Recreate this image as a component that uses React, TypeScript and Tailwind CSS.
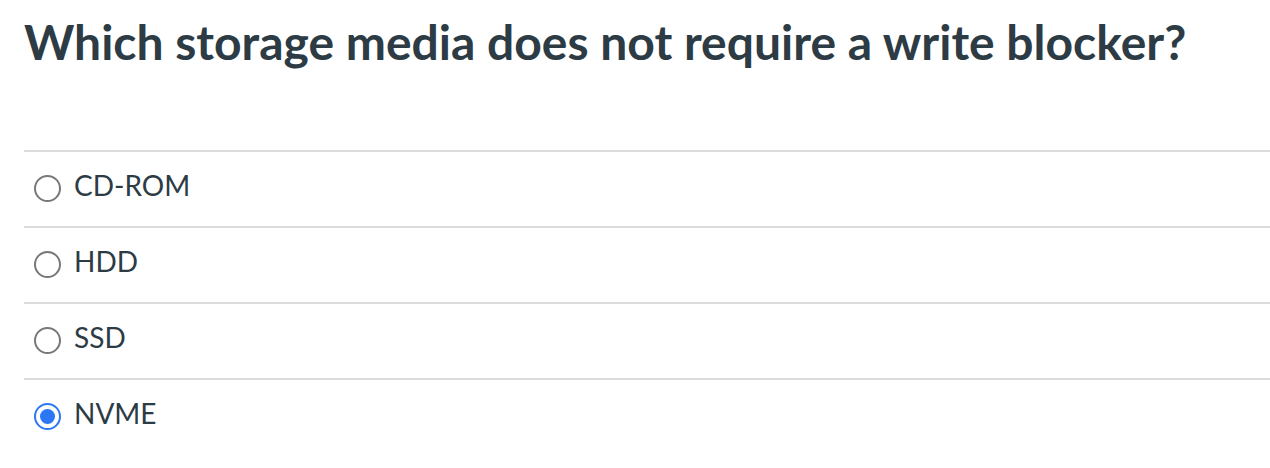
const options = ["CD-ROM", "HDD", "SSD", "NVME"];

function Radio({ checked }: { checked: boolean }) {
  return checked ? (
    <span className="flex h-[27px] w-[27px] shrink-0 items-center justify-center rounded-full border-[2.5px] border-[#2c77f4] bg-white">
      <span className="h-[15px] w-[15px] rounded-full bg-[#2c77f4]" />
    </span>
  ) : (
    <span className="h-[27px] w-[27px] shrink-0 rounded-full border-2 border-[#787878] bg-white" />
  );
}

export default function App() {
  const selected = "NVME";
  return (
    <div className="h-[468px] overflow-hidden bg-white pl-6 font-['Lato',sans-serif] text-[#2d3b45]">
      <h1 className="pt-[13px] text-[48px] font-bold leading-[1.2]">
        Which storage media does not require a write blocker?
      </h1>
      <div className="mt-[79px]">
        {options.map((opt) => (
          <label
            key={opt}
            className="flex h-[76px] items-center gap-[13px] border-t-2 border-[#dcdcdc] pl-[10px]"
          >
            <Radio checked={opt === selected} />
            <span className="pb-2 text-[28px] leading-none">{opt}</span>
          </label>
        ))}
      </div>
    </div>
  );
}
